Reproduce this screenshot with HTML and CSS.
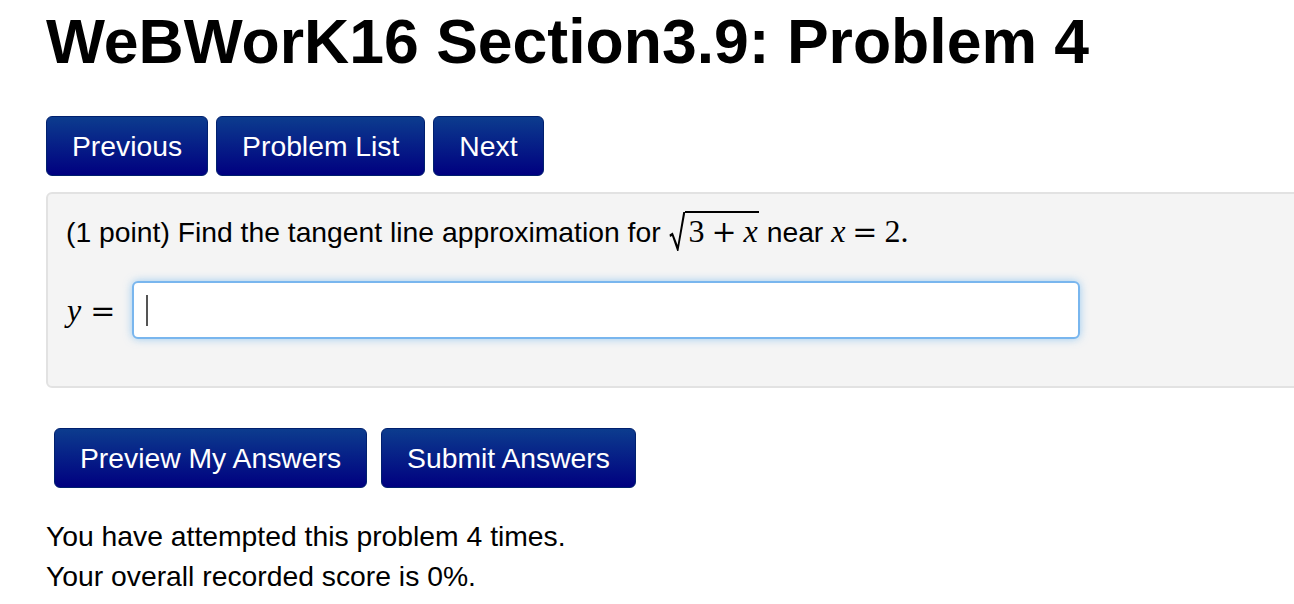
FILE: index.html
```html
<!DOCTYPE html>
<html>

<head>
    <meta charset="utf-8">
    <link rel="stylesheet" href="styles.css">
</head>

<body>
    <h1 class="title">WeBWorK16 Section3.9: Problem 4</h1>

    <div class="nav-buttons">
        <a class="btn" href="#">Previous</a>
        <a class="btn" href="#">Problem List</a>
        <a class="btn" href="#">Next</a>
    </div>

    <div class="problem">
        <p class="problem-text">
            (1 point) Find the tangent line approximation for
            <span class="math sqrt"><svg class="radical" width="16" height="39" viewBox="0 0 16 39"><path d="M0.5 22.5 L3.8 20.6 L8.6 33 L14.2 0 L16 0 L16 2 L9.4 39 L8.2 39 L3 24 L1 25 Z" fill="#000"/></svg><span class="radicand">3<span class="op">+</span><i>x</i></span></span>
            near <span class="math"><i>x</i><span class="op">=</span>2.</span>
        </p>
        <div class="answer-row">
            <span class="math answer-label"><i>y</i><span class="op">=</span></span>
            <div class="answer-field">
                <input type="text" class="answer-input">
                <span class="caret"></span>
            </div>
        </div>
    </div>

    <div class="submit-buttons">
        <button class="btn">Preview My Answers</button>
        <button class="btn">Submit Answers</button>
    </div>

    <div class="attempts">
        You have attempted this problem 4 times.<br>
        Your overall recorded score is 0%.
    </div>
</body>

</html>
```

FILE: styles.css
```css
* {
    margin: 0;
    padding: 0;
    box-sizing: border-box;
}

body {
    font-family: "Liberation Sans", Arial, sans-serif;
    font-size: 28.3px;
    line-height: 40px;
    color: #000000;
    background: #ffffff;
    padding-left: 46px;
    overflow-x: hidden;
}

.title {
    font-size: 62.5px;
    font-weight: 700;
    line-height: 80px;
    padding-top: 1px;
}

.nav-buttons {
    display: flex;
    gap: 8px;
    margin-top: 35px;
}

.btn {
    display: inline-block;
    font-family: inherit;
    font-size: 28.3px;
    line-height: 32px;
    padding: 13px 25px;
    color: #ffffff;
    text-decoration: none;
    background: linear-gradient(#0c3c8e, #000080);
    border: 1px solid #00206e;
    border-radius: 6px;
    cursor: pointer;
}

.problem {
    margin-top: 16px;
    margin-right: -30px;
    background: #f4f4f4;
    border: 2px solid #e2e2e2;
    border-radius: 6px;
    padding: 18px 18px 47px;
}

.problem-text {
    line-height: 40px;
}

.math {
    font-family: "Liberation Serif", "Times New Roman", serif;
    font-size: 32px;
    line-height: 34px;
}

.op {
    font-family: "DejaVu Serif", serif;
    font-size: 30px;
    margin: 0 7px;
}

.radical {
    vertical-align: -9px;
    margin-left: 1px;
}

.radicand {
    border-top: 2px solid #000000;
    padding-left: 3px;
    padding-right: 1px;
}

.answer-row {
    display: flex;
    align-items: center;
    gap: 17px;
    margin-top: 29px;
}

.answer-label {
    white-space: nowrap;
    padding-left: 1px;
}

.answer-label .op {
    margin: 0 0 0 9px;
}

.answer-field {
    position: relative;
}

.answer-input {
    width: 948px;
    height: 58px;
    border: 2px solid #79b6ee;
    border-radius: 6px;
    background: #ffffff;
    box-shadow: 0 0 9px rgba(82, 168, 236, 0.55);
    outline: none;
    font-size: 28px;
}

.caret {
    position: absolute;
    left: 14px;
    top: 14px;
    width: 2px;
    height: 31px;
    background: #555555;
}

.submit-buttons {
    display: flex;
    gap: 14px;
    margin-top: 40px;
    margin-left: 8px;
}

.attempts {
    margin-top: 28px;
}
```
